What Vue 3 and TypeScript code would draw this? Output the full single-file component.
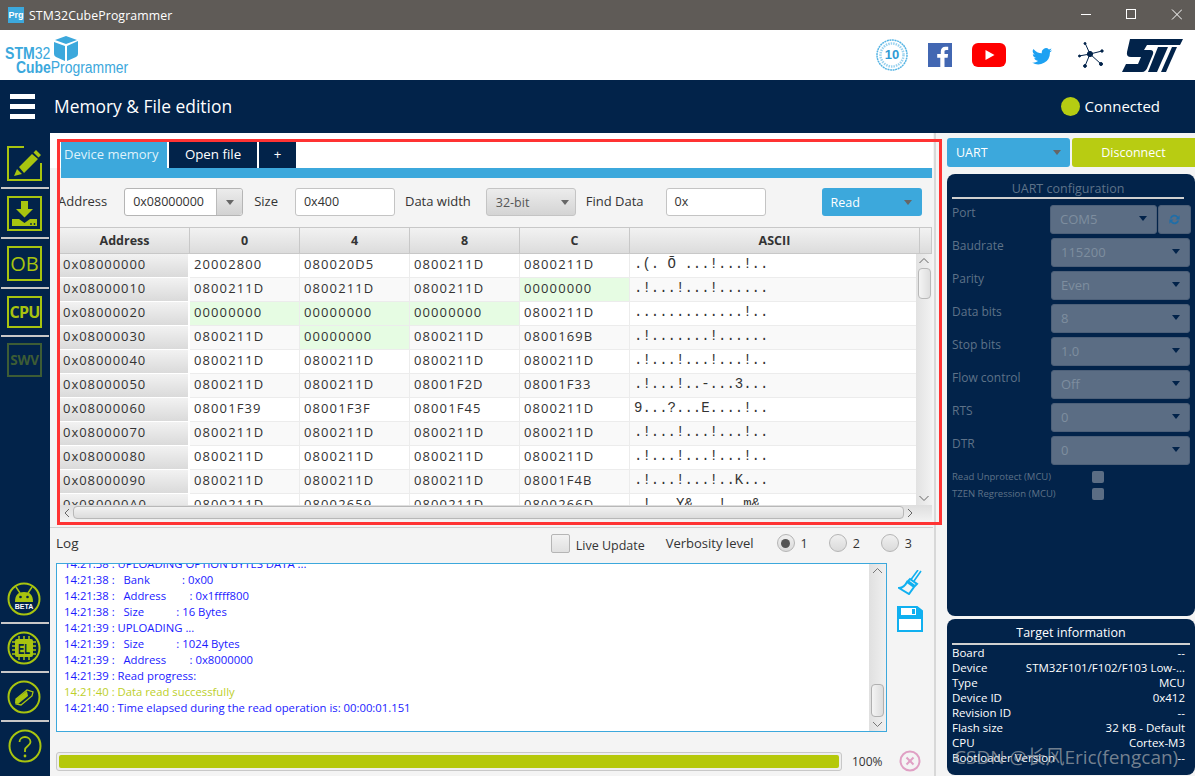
<script setup lang="ts">
const cols: [string, number][] = [['Address', 130], ['0', 110], ['4', 110], ['8', 110], ['C', 110], ['ASCII', 290]]
const rows = [
  ['0x08000000', '20002800', '080020D5', '0800211D', '0800211D', '.(. Õ ...!...!..'],
  ['0x08000010', '0800211D', '0800211D', '0800211D', '00000000', '.!...!...!......'],
  ['0x08000020', '00000000', '00000000', '00000000', '0800211D', '.............!..'],
  ['0x08000030', '0800211D', '00000000', '0800211D', '0800169B', '.!.......!......'],
  ['0x08000040', '0800211D', '0800211D', '0800211D', '0800211D', '.!...!...!...!..'],
  ['0x08000050', '0800211D', '0800211D', '08001F2D', '08001F33', '.!...!..-...3...'],
  ['0x08000060', '08001F39', '08001F3F', '08001F45', '0800211D', '9...?...E....!..'],
  ['0x08000070', '0800211D', '0800211D', '0800211D', '0800211D', '.!...!...!...!..'],
  ['0x08000080', '0800211D', '0800211D', '0800211D', '0800211D', '.!...!...!...!..'],
  ['0x08000090', '0800211D', '0800211D', '0800211D', '08001F4B', '.!...!...!..K...'],
  ['0x080000A0', '0800211D', '08002659', '0800211D', '0800266D', '.!...Y&...!..m&.'],
]
const config = [
  ['Baudrate', '115200'], ['Parity', 'Even'], ['Data bits', '8'], ['Stop bits', '1.0'],
  ['Flow control', 'Off'], ['RTS', '0'], ['DTR', '0'],
]
const targets = [
  ['Board', '--'], ['Device', 'STM32F101/F102/F103 Low-...'], ['Type', 'MCU'], ['Device ID', '0x412'],
  ['Revision ID', '--'], ['Flash size', '32 KB - Default'], ['CPU', 'Cortex-M3'], ['Bootloader Version', '--'],
]
const log: [string, string][] = [
  ['14:21:38 : UPLOADING OPTION BYTES DATA ...', ''],
  ['14:21:38 :   Bank           : 0x00', ''],
  ['14:21:38 :   Address        : 0x1ffff800', ''],
  ['14:21:38 :   Size           : 16 Bytes', ''],
  ['14:21:39 : UPLOADING ...', ''],
  ['14:21:39 :   Size           : 1024 Bytes', ''],
  ['14:21:39 :   Address        : 0x8000000', ''],
  ['14:21:39 : Read progress:', ''],
  ['14:21:40 : Data read successfully', 'ok'],
  ['14:21:40 : Time elapsed during the read operation is: 00:00:01.151', ''],
]
const isGreen = (v: string) => v === '00000000'
</script>

<template>
  <div class="app">
    <div class="titlebar">
      <span class="prg">Prg</span>
      <span class="title">STM32CubeProgrammer</span>
      <span class="spacer"></span>
      <svg class="winbtns" width="102" height="30" viewBox="0 0 102 30">
        <path d="M1 14.500h10" stroke="#fff" fill="none" />
        <rect x="46.500" y="9.500" width="9" height="9" stroke="#fff" fill="none" />
        <path d="M92 9.500l10 10M102 9.500l-10 10" stroke="#fff" fill="none" />
      </svg>
    </div>

    <div class="brand">
      <div class="logo">
        <svg class="cube" width="26" height="28" viewBox="0 0 26 28">
          <path d="M1 7 12 11v15L3 22Q1 21 1 19Z" fill="#3ca8dc" />
          <path d="M14 11 25 6v13q0 2-2 3l-9 4Z" fill="#3ca8dc" />
          <path d="M2 5 13 1l11 4-11 4Z" fill="#3ca8dc" />
        </svg>
        <div class="l1"><b>STM</b>32</div>
        <div class="l2"><b>Cube</b>Programmer</div>
      </div>
      <span class="spacer"></span>
      <svg class="i-badge" width="32" height="32" viewBox="0 0 32 32">
        <circle cx="16" cy="16" r="15" fill="none" stroke="#55b4e4" stroke-width="1.500" stroke-dasharray="2 .6" />
        <circle cx="16" cy="16" r="11.500" fill="none" stroke="#9ad2ef" stroke-width="2.500" stroke-dasharray="1.500 1" />
        <text x="16" y="20" text-anchor="middle" font-family="Liberation Sans" font-size="13" font-weight="700" fill="#2f9ad4">10</text>
      </svg>
      <svg class="i-fb" width="24" height="24" viewBox="0 0 24 24">
        <rect width="24" height="24" fill="#4267b2" />
        <path d="M16.500 24v-9.300h3.100l.5-3.600h-3.600V8.800c0-1 .3-1.800 1.800-1.800h1.900V3.800c-.3 0-1.500-.1-2.800-.1-2.800 0-4.600 1.700-4.600 4.700v2.700H9.200v3.600h3.100V24Z" fill="#fff" />
      </svg>
      <svg class="i-yt" width="34" height="24" viewBox="0 0 34 24">
        <rect width="34" height="24" rx="6" fill="#f00" />
        <path d="M13.500 7v10l9-5Z" fill="#fff" />
      </svg>
      <svg class="i-tw" width="20" height="17" viewBox="0 0 24 20">
        <path d="M24 2.400c-.9.400-1.800.700-2.800.800 1-.6 1.800-1.600 2.200-2.700-1 .6-2 1-3.100 1.200A4.900 4.900 0 0 0 11.900 6.200 14 14 0 0 1 1.700.9a4.900 4.900 0 0 0 1.500 6.600c-.8 0-1.600-.2-2.200-.6 0 2.400 1.700 4.400 3.900 4.900-.7.200-1.500.2-2.200.1.600 2 2.400 3.400 4.600 3.400A9.900 9.900 0 0 1 0 17.300 14 14 0 0 0 21.500 4.900c1-.7 1.800-1.500 2.500-2.500Z" fill="#1da1f2" />
      </svg>
      <svg class="i-net" width="26" height="26" viewBox="0 0 26 26">
        <g stroke="#02234a" stroke-width="1" fill="#02234a">
          <path d="M12 12 7 1M12 12 24 9M12 12 1 14M12 12 7 24M12 12 23 22" />
          <circle cx="12" cy="12" r="2.600" />
          <circle cx="7" cy="1.500" r="1" />
          <circle cx="24" cy="9" r="1.200" />
          <circle cx="1.500" cy="14" r="1" />
          <circle cx="7" cy="24" r="1.400" />
          <circle cx="23" cy="22" r="1.500" />
        </g>
      </svg>
      <svg class="i-st" width="61" height="33" viewBox="0 0 61 33">
        <path d="M8 0H61L58 6H25L22 11H28Q32 11 31 15L26 27Q24 33 20 33H0L4 25H16L19 18H9Q4 18 5 13Z" fill="#02234a" />
        <path d="M36 8H46L35 33H26Z" fill="#02234a" />
        <path d="M50 8H55L44 33H39Z" fill="#02234a" />
      </svg>
    </div>

    <div class="appbar">
      <div class="burger"><i></i><i></i><i></i></div>
      <span class="page">Memory &amp; File edition</span>
      <span class="spacer"></span>
      <span class="dot"></span>
      <span class="conn">Connected</span>
    </div>

    <div class="body">
      <aside class="side">
        <div class="nav">
          <div class="nav-item">
            <svg width="35" height="35" viewBox="0 0 35 35">
              <path d="M17 1H1V34H34V17" fill="none" stroke="#a8c40f" stroke-width="2" />
              <path d="M12 21 25 8l6 5-14 14ZM10 23l5 5-8 2ZM26.500 6.500 29 4l5 5-2.500 2.500Z" fill="#a8c40f" />
            </svg>
          </div>
          <div class="nav-item">
            <svg width="35" height="35" viewBox="0 0 35 35">
              <rect x="1" y="1" width="33" height="33" fill="none" stroke="#a8c40f" stroke-width="2" />
              <path d="M14 5h7v8h5l-8.500 8.500L9 13h5Z" fill="#a8c40f" />
              <path d="M5 23h7l5.500 4 5.500-4h7v7H5Z" fill="#a8c40f" />
              <circle cx="24" cy="28" r=".9" fill="#02234a" />
              <circle cx="27.500" cy="28" r=".9" fill="#02234a" />
            </svg>
          </div>
          <div class="nav-item"><span class="boxed ob">OB</span></div>
          <div class="nav-item short"><span class="boxed cpu">CPU</span></div>
          <div class="nav-item last"><span class="boxed swv">SWV</span></div>
        </div>
        <span class="spacer"></span>
        <div class="nav lower">
          <div class="low-item">
            <svg width="34" height="34" viewBox="0 0 34 34">
              <circle cx="17" cy="17" r="15.500" fill="none" stroke="#a8c40f" stroke-width="2" />
              <path d="M9 5l4 6M25 5l-4 6" stroke="#a8c40f" stroke-width="1.500" />
              <path d="M8 20c0-7 3-10 9-10s9 3 9 10Z" fill="#a8c40f" />
              <circle cx="13.500" cy="15" r="1.300" fill="#02234a" />
              <circle cx="20.500" cy="15" r="1.300" fill="#02234a" />
              <text x="17" y="27" text-anchor="middle" font-size="7" font-weight="700" font-family="Liberation Sans" fill="#fff">BETA</text>
            </svg>
          </div>
          <div class="low-item">
            <svg width="34" height="34" viewBox="0 0 34 34">
              <circle cx="17" cy="17" r="15.500" fill="none" stroke="#a8c40f" stroke-width="2" />
              <rect x="8" y="8" width="18" height="18" rx="2" fill="#a8c40f" />
              <path d="M5 11h3M5 15h3M5 19h3M5 23h3M26 11h3M26 15h3M26 19h3M26 23h3M12 5v3M17 5v3M22 5v3M12 26v3M17 26v3M22 26v3" stroke="#a8c40f" stroke-width="1.500" />
              <text x="17" y="22.500" text-anchor="middle" font-size="14" font-weight="700" font-family="Liberation Sans" textLength="12" lengthAdjust="spacingAndGlyphs" fill="#02234a">EL</text>
            </svg>
          </div>
          <div class="low-item">
            <svg width="34" height="34" viewBox="0 0 34 34">
              <circle cx="17" cy="17" r="15.500" fill="none" stroke="#a8c40f" stroke-width="2" />
              <path d="M9 19 20 10l6 2-1 4-11 9-5-1Z" fill="none" stroke="#a8c40f" stroke-width="1.300" />
              <path d="M9 19l11-8 1 5-10 8-3-1Z" fill="#a8c40f" />
            </svg>
          </div>
          <div class="low-item last">
            <svg width="34" height="34" viewBox="0 0 34 34">
              <circle cx="17" cy="17" r="15.500" fill="none" stroke="#a8c40f" stroke-width="2" />
              <path d="M11.500 13c0-3 2.500-5 5.500-5s5.500 2 5.500 5c0 4-5.500 4-5.500 8v2" fill="none" stroke="#a8c40f" stroke-width="1.800" />
              <circle cx="17" cy="27" r="1.400" fill="#a8c40f" />
            </svg>
          </div>
        </div>
      </aside>

      <main class="main">
        <section class="mem">
          <div class="tabs">
            <span class="tab active">Device memory</span>
            <span class="tab t2">Open file</span>
            <span class="tab t3">+</span>
          </div>
          <div class="strip"></div>
          <div class="tools">
            <label class="lb addr">Address</label>
            <div class="combo">
              <span class="combo-v">0x08000000</span>
              <span class="combo-a"><i class="tri"></i></span>
            </div>
            <label class="lb size">Size</label>
            <div class="inp w100">0x400</div>
            <label class="lb dw">Data width</label>
            <div class="sel"><span>32-bit</span><i class="tri"></i></div>
            <label class="lb fd">Find Data</label>
            <div class="inp w100">0x</div>
            <div class="read"><span>Read</span><i class="tri"></i></div>
          </div>
          <div class="table">
            <div class="thead">
              <span v-for="c in cols" :key="c[0]" class="th" :style="{ width: c[1] + 'px' }">{{ c[0] }}</span>
              <span class="th fill"></span>
            </div>
            <div class="tbody">
              <div class="rows">
                <div v-for="(r, i) in rows" :key="r[0]" class="tr" :class="{ odd: i % 2 === 1 }">
                  <span class="td rh" style="width:130px">{{ r[0] }}</span>
                  <span
                    v-for="(v, j) in r.slice(1, 5)"
                    :key="j"
                    class="td hex"
                    :class="{ zero: isGreen(v) }"
                    style="width:110px"
                  >{{ v }}</span>
                  <span class="td ascii">{{ r[5] }}</span>
                </div>
              </div>
              <div class="vbar">
                <svg width="16" height="14" viewBox="0 0 16 14"><path d="M3.500 9 8 4.500 12.500 9" fill="none" stroke="#666" /></svg>
                <div class="vthumb"></div>
                <span class="spacer"></span>
                <svg width="16" height="14" viewBox="0 0 16 14"><path d="M3.500 5 8 9.500 12.500 5" fill="none" stroke="#666" /></svg>
              </div>
            </div>
            <div class="hbar">
              <svg width="10" height="14" viewBox="0 0 10 14"><path d="M7 3 3 7l4 4" fill="none" stroke="#666" /></svg>
              <div class="hthumb"></div>
              <svg width="10" height="14" viewBox="0 0 10 14"><path d="M3 3l4 4-4 4" fill="none" stroke="#666" /></svg>
            </div>
          </div>
        </section>

        <section class="logsec">
          <div class="loghead">
            <span class="logt">Log</span>
            <span class="spacer"></span>
            <span class="check"></span>
            <span class="live">Live Update</span>
            <span class="verb">Verbosity level</span>
            <span class="radio on"><i></i></span><span class="rl">1</span>
            <span class="radio"></span><span class="rl">2</span>
            <span class="radio"></span><span class="rl last">3</span>
          </div>
          <div class="logrow">
            <div class="logbox">
              <div class="logtext">
                <div class="logscroll">
                  <div v-for="(l, i) in log" :key="i" class="ll" :class="{ ok: l[1] === 'ok' }">{{ l[0] }}</div>
                </div>
              </div>
              <div class="lvbar">
                <svg width="17" height="14" viewBox="0 0 17 14"><path d="M4 9l4.500-4.500L13 9" fill="none" stroke="#777" /></svg>
                <span class="spacer"></span>
                <div class="lthumb"></div>
                <svg width="17" height="14" viewBox="0 0 17 14"><path d="M4 5l4.500 4.500L13 5" fill="none" stroke="#777" /></svg>
              </div>
            </div>
            <div class="logicons">
              <svg width="24" height="25" viewBox="0 0 24 25">
                <path d="M23 1 16 11M20 0 13 9.500" stroke="#10b0f0" stroke-width="1.600" />
                <path d="M12 9l7 5-2 2-7-5ZM9 12l7 5-5 7-10-6c3 0 6-2 8-6Z" fill="none" stroke="#10b0f0" stroke-width="2" />
              </svg>
              <svg width="26" height="26" viewBox="0 0 26 26">
                <path d="M1 1h19l5 4v20H1Z" fill="#fff" stroke="#10b0f0" stroke-width="2" />
                <path d="M1 1h19l5 4v8H1Z" fill="#10b0f0" />
                <rect x="4" y="2" width="15" height="7" fill="#fff" />
                <rect x="15" y="3" width="3" height="5" fill="#10b0f0" />
              </svg>
            </div>
          </div>
          <div class="progress">
            <div class="pbar"><div class="pfill"></div></div>
            <span class="pct">100%</span>
            <svg width="22" height="22" viewBox="0 0 22 22">
              <circle cx="11" cy="11" r="9.500" fill="none" stroke="#e0a0c4" stroke-width="2" />
              <path d="M7.500 7.500l7 7M14.500 7.500l-7 7" stroke="#e0a0c4" stroke-width="2" />
            </svg>
          </div>
        </section>
      </main>

      <div class="divider"></div>

      <aside class="right">
        <div class="connrow">
          <div class="uart"><span>UART</span><i class="tri"></i></div>
          <div class="disc">Disconnect</div>
        </div>
        <div class="panel cfg">
          <div class="ptitle dim">UART configuration</div>
          <div class="cfgrow firstrow">
            <span class="clb">Port</span>
            <div class="portgrp">
              <div class="csel port"><span>COM5</span><i class="tri dark"></i></div>
              <div class="refresh">
                <svg width="13" height="13" viewBox="0 0 14 14">
                  <path d="M2 6a5 5 0 0 1 9-2l1.500-1.500V7H8l1.700-1.700A3.200 3.200 0 0 0 4 6Z" fill="#1f6ea8" />
                  <path d="M12 8a5 5 0 0 1-9 2l-1.500 1.500V7H6L4.300 8.700A3.200 3.200 0 0 0 10 8Z" fill="#1f6ea8" />
                </svg>
              </div>
            </div>
          </div>
          <div v-for="c in config" :key="c[0]" class="cfgrow">
            <span class="clb">{{ c[0] }}</span>
            <div class="csel"><span>{{ c[1] }}</span><i class="tri dark"></i></div>
          </div>
          <div class="chkrow first"><span>Read Unprotect (MCU)</span><i></i></div>
          <div class="chkrow"><span>TZEN Regression (MCU)</span><i></i></div>
        </div>
        <div class="panel tgt">
          <div class="ptitle">Target information</div>
          <div v-for="t in targets" :key="t[0]" class="trow"><span>{{ t[0] }}</span><span>{{ t[1] }}</span></div>
        </div>
      </aside>

      <div class="redbox"></div>
      <div class="wm">CSDN @长风Eric(fengcan)</div>
    </div>
  </div>
</template>

<style>
html, body { margin: 0; height: 100%; overflow: hidden; }
</style>

<style scoped>
.app { width: 1195px; height: 776px; display: flex; flex-direction: column; overflow: hidden; font-family: "Open Sans", "Noto Sans", sans-serif; font-size: 12px; color: #333; background: #f4f4f4; }
.spacer { flex: 1; }
.titlebar { height: 30px; background: #5f5b57; display: flex; align-items: center; padding-left: 8px; color: #fff; flex: none; }
.prg { width: 16px; height: 16px; background: #3ca8dc; color: #fff; font: 700 9px "Liberation Sans", sans-serif; display: flex; align-items: center; justify-content: center; }
.title { margin-left: 5px; font-size: 12.300px; letter-spacing: .1px; }
.winbtns { margin-right: 13px; }
.brand { height: 50px; background: #fff; display: flex; align-items: center; flex: none; padding-right: 12px; }
.logo { position: relative; width: 130px; height: 50px; margin-left: 5px; color: #3ca8dc; font-family: "Liberation Sans", sans-serif; }
.cube { position: absolute; left: 48px; top: 5px; }
.l1 { position: absolute; left: 0; top: 15px; font-size: 16px; line-height: 18px; transform: scaleX(.88); transform-origin: left; }
.l1 b, .l2 b { font-weight: 700; }
.l2 { position: absolute; left: 11px; top: 29px; font-size: 16px; line-height: 18px; transform: scaleX(.87); transform-origin: left; white-space: nowrap; }
.i-badge { margin-right: 20px; }
.i-fb { margin-right: 20px; }
.i-yt { margin-right: 26px; }
.i-tw { margin-right: 26px; margin-top: 2px; }
.i-net { margin-right: 18px; }
.appbar { height: 53px; background: #02234a; display: flex; align-items: center; color: #fff; flex: none; padding: 0 35px 1px 10px; box-sizing: border-box; }
.burger { width: 25px; display: flex; flex-direction: column; gap: 5px; }
.burger i { height: 5px; background: #fff; display: block; }
.page { margin-left: 19px; font-size: 17.400px; }
.dot { width: 19px; height: 19px; border-radius: 50%; background: #b5cc12; margin-right: 5px; }
.conn { font-size: 15px; }
.body { flex: 1; display: flex; position: relative; min-height: 0; }
.side { width: 50px; background: #02234a; display: flex; flex-direction: column; align-items: stretch; flex: none; }
.nav { display: flex; flex-direction: column; }
.nav-item { height: 50px; margin: 0 1px; display: flex; align-items: center; justify-content: center; border-bottom: 2px solid #c8c8c8; box-sizing: border-box; padding-right: 1px; }
.nav .nav-item:first-child { height: 56px; padding-top: 7px; }
.nav-item.short { height: 48px; }
.nav-item.last { border-bottom: none; height: 44px; padding-top: 2px; }
.boxed { width: 35px; height: 35px; box-sizing: border-box; border: 2px solid #a8c40f; display: flex; align-items: center; justify-content: center; color: #a8c40f; }
.ob { font-size: 20px; }
.cpu { font-size: 16px; font-weight: 700; height: 32px; letter-spacing: -.8px; }
.swv { font-size: 13.500px; font-weight: 700; height: 34px; border-color: #3d5c35; color: #3d5c35; letter-spacing: -.3px; }
.lower { margin-bottom: 6px; }
.low-item { height: 49px; margin: 0 1px; display: flex; align-items: center; justify-content: center; border-bottom: 2px solid #c8c8c8; box-sizing: border-box; padding-right: 2px; }
.low-item.last { border-bottom: none; height: 48px; padding-left: 2px; }
.main { width: 883px; display: flex; flex-direction: column; flex: none; }
.mem { height: 395px; background: #f4f4f4; border-bottom: 1px solid #d0d0d0; box-sizing: border-box; flex: none; }
.tabs { height: 35px; background: #fff; display: flex; align-items: flex-end; padding-left: 11px; gap: 2px; box-sizing: border-box; }
.tab { height: 27px; background: #02234a; color: #fff; display: flex; align-items: center; justify-content: center; font-size: 13.300px; padding-bottom: 2px; box-sizing: border-box; }
.tab.active { width: 106px; background: #3ca8dc; color: #dff2fb; justify-content: flex-start; padding-left: 3px; font-size: 13px; }
.t2 { width: 88px; }
.t3 { width: 37px; }
.strip { height: 10px; margin: 0 1px 0 11px; background: #3ca8dc; }
.tools { height: 49px; display: flex; align-items: center; padding: 0 0 1px 8px; box-sizing: border-box; position: relative; }
.lb { font-size: 13px; color: #333; position: relative; top: -1px; }
.addr { margin-right: 17px; }
.combo { width: 117px; height: 26px; border: 1px solid #b5b5b5; border-radius: 3px; background: #fff; display: flex; box-sizing: content-box; }
.combo-v { flex: 1; font-size: 12.500px; padding-left: 8px; line-height: 26px; }
.combo-a { width: 25px; background: linear-gradient(#ececec, #d2d2d2); border-left: 1px solid #bbb; display: flex; align-items: center; justify-content: center; border-radius: 0 3px 3px 0; }
.size { margin: 0 17px 0 11px; }
.inp { height: 26px; line-height: 26px; border: 1px solid #c4c4c4; border-radius: 3px; background: #fff; font-size: 12.500px; padding-left: 8px; box-sizing: content-box; }
.w100 { width: 90px; }
.dw { margin: 0 15px 0 10px; }
.sel { width: 90px; height: 28px; border-radius: 3px; border: 1px solid #c4c4c4; box-sizing: border-box; background: linear-gradient(#ececec, #d4d4d4); display: flex; align-items: center; justify-content: space-between; padding: 0 6px 0 9px; font-size: 12.500px; color: #555; }
.fd { margin: 0 22px 0 10px; }
.read { width: 100px; height: 28px; margin-left: 56px; background: #3ca8dc; border-radius: 3px; color: #fff; display: flex; align-items: center; justify-content: space-between; padding: 0 10px 0 9px; box-sizing: border-box; font-size: 12.500px; }
.tri { display: block; width: 0; height: 0; border-left: 4.500px solid transparent; border-right: 4.500px solid transparent; border-top: 5px solid #666; }
.tri.dark { border-top-color: #02234a; }
.table { margin: 0 1px 0 10px; background: #fff; height: 293px; display: flex; flex-direction: column; }
.thead { display: flex; height: 27px; flex: none; }
.th { box-sizing: border-box; background: linear-gradient(#f2f2f2, #dcdcdc); border: 1px solid #c8c8c8; border-left: none; display: flex; align-items: center; justify-content: center; font-weight: 700; font-size: 12.500px; color: #333; }
.th.fill { flex: 1; }
.tbody { display: flex; height: 251px; flex: none; overflow: hidden; }
.rows { flex: 1; overflow: hidden; }
.tr { display: flex; height: 24px; background: #fff; }
.tr.odd { background: #f9f9f9; }
.td { box-sizing: border-box; height: 24px; line-height: 21px; padding-left: 4px; font-size: 13px; border-right: 1px solid #ececec; border-bottom: 1px solid #ececec; color: #333; letter-spacing: .95px; flex: none; }
.td.hex { letter-spacing: 1.100px; }
.rh { background: linear-gradient(#f2f2f2, #dadada); padding-left: 3px; border-right: 2px solid #fff; border-bottom: 1px solid #fff; }
.td.zero { background: #e6fce3; }
.td.ascii { flex: 1; border-right: none; letter-spacing: 0; font-family: "Liberation Mono", monospace; font-size: 14px; }
.vbar { width: 16px; background: linear-gradient(90deg, #e2e2e2, #f2f2f2); display: flex; flex-direction: column; align-items: center; flex: none; }
.vthumb { width: 13px; height: 31px; border: 1px solid #b8b8b8; border-radius: 4px; background: linear-gradient(90deg, #f4f4f4, #dedede); box-sizing: border-box; }
.hbar { height: 15px; flex: none; display: flex; align-items: center; background: linear-gradient(#dedede, #f0f0f0); padding: 0 17px 0 2px; }
.hthumb { flex: 1; height: 13px; border: 1px solid #b8b8b8; border-radius: 4px; background: linear-gradient(#f2f2f2, #dcdcdc); box-sizing: border-box; margin: 0 1px; }
.logsec { flex: 1; display: flex; flex-direction: column; min-height: 0; background: #f4f4f4; }
.loghead { height: 35px; display: flex; align-items: center; padding: 0 21px 5px 6px; box-sizing: border-box; flex: none; }
.logt { font-size: 13.500px; }
.check { width: 19px; height: 19px; border: 1px solid #b5b5b5; background: linear-gradient(#f2f2f2, #e0e0e0); border-radius: 2px; box-sizing: border-box; }
.live { margin-left: 6px; font-size: 12.500px; margin-top: 4px; }
.verb { margin-left: 21px; margin-right: 23px; font-size: 13px; }
.radio { width: 18px; height: 18px; border: 1px solid #b5b5b5; border-radius: 50%; background: linear-gradient(#f0f0f0, #dadada); display: flex; align-items: center; justify-content: center; box-sizing: border-box; }
.radio.on i { display: block; width: 9px; height: 9px; border-radius: 50%; background: #555; }
.rl { margin: 0 21px 0 6px; font-size: 12.500px; }
.rl.last { margin-right: 0; }
.logrow { display: flex; height: 169px; flex: none; padding-left: 6px; }
.logbox { width: 831px; flex: none; box-sizing: border-box; border: 1px solid #3ca8dc; background: #fff; display: flex; overflow: hidden; }
.logtext { flex: 1; overflow: hidden; position: relative; }
.logscroll { margin-top: -8px; padding-left: 7px; }
.ll { height: 16px; line-height: 16px; font-size: 11.300px; color: #1a1aff; white-space: pre; }
.ll.ok { color: #bdcf2a; }
.lvbar { width: 17px; background: linear-gradient(90deg, #e0e0e0, #f0f0f0); display: flex; flex-direction: column; align-items: center; }
.lthumb { width: 13px; height: 33px; border: 1px solid #b0b0b0; border-radius: 4px; background: linear-gradient(90deg, #f4f4f4, #dcdcdc); box-sizing: border-box; }
.logicons { flex: 1; display: flex; flex-direction: column; align-items: center; gap: 11px; padding-top: 7px; }
.progress { display: flex; align-items: center; height: 20px; padding-left: 6px; margin-top: 19px; flex: none; }
.pbar { width: 786px; height: 19px; border: 1px solid #c8c8c8; border-radius: 3px; background: #eee; box-sizing: border-box; padding: 2px; }
.pfill { height: 100%; background: #b5c80a; border-radius: 2px; }
.pct { margin-left: 10px; font-size: 12px; width: 47px; }
.divider { width: 2px; margin-left: 1px; background: #d8d8d8; flex: none; }
.right { width: 248px; margin-left: 11px; padding-top: 5px; display: flex; flex-direction: column; flex: none; }
.connrow { display: flex; gap: 2px; height: 29px; flex: none; }
.uart { width: 123px; background: #3ca8dc; color: #fff; border-radius: 3px; display: flex; align-items: center; justify-content: space-between; padding: 0 9px; box-sizing: border-box; font-size: 12.500px; }
.disc { flex: 1; background: #b8cc12; color: #fff; border-radius: 3px 0 0 3px; display: flex; align-items: center; justify-content: center; font-size: 12.500px; }
.panel { background: #02234a; border-radius: 8px; box-sizing: border-box; padding: 0 5px; flex: none; }
.cfg { margin-top: 7px; height: 442px; }
.tgt { margin-top: 3px; height: 156px; color: #fff; }
.ptitle { text-align: center; font-size: 12.500px; line-height: 20px; padding-top: 4px; border-bottom: 2px solid #d0d0d0; color: #fff; height: 20px; }
.ptitle.dim { color: #5e7288; }
.cfg .ptitle { padding-top: 5px; margin-right: 6px; height: 18px; line-height: 19px; }
.cfgrow { display: flex; justify-content: space-between; height: 33px; }
.cfgrow.firstrow { margin-top: 6px; }
.clb { color: #5e7288; font-size: 12px; margin-top: -1px; }
.csel { width: 139px; height: 29px; background: #5b6d84; border-radius: 3px; box-sizing: border-box; padding: 0 9px 2px; display: flex; align-items: center; justify-content: space-between; color: #7e8e9f; font-size: 13px; border: 1px solid #4d6079; }
.portgrp { display: flex; gap: 1px; margin-right: -1px; }
.csel.port { width: 107px; margin: 0; }
.refresh { width: 33px; height: 29px; background: #5b6d84; border-radius: 3px; display: flex; align-items: center; justify-content: center; border: 1px solid #4d6079; box-sizing: border-box; }
.chkrow { display: flex; justify-content: space-between; align-items: center; height: 17px; color: #5e7288; font-size: 9.500px; padding-right: 86px; }
.chkrow.first { margin-top: -1px; }
.chkrow i { width: 12px; height: 12px; background: #5b6d84; border-radius: 2px; }
.trow { display: flex; justify-content: space-between; height: 15px; line-height: 15px; font-size: 11.500px; padding-right: 5px; white-space: nowrap; }
.redbox { position: absolute; left: 57px; top: 6px; width: 885px; height: 386px; border: 3px solid #f33; box-sizing: border-box; pointer-events: none; }
.wm { position: absolute; left: 954px; top: 609px; font-size: 19px; color: rgba(190, 190, 190, .62); white-space: nowrap; font-family: "Open Sans", "Noto Sans CJK SC", sans-serif; pointer-events: none; }
</style>
